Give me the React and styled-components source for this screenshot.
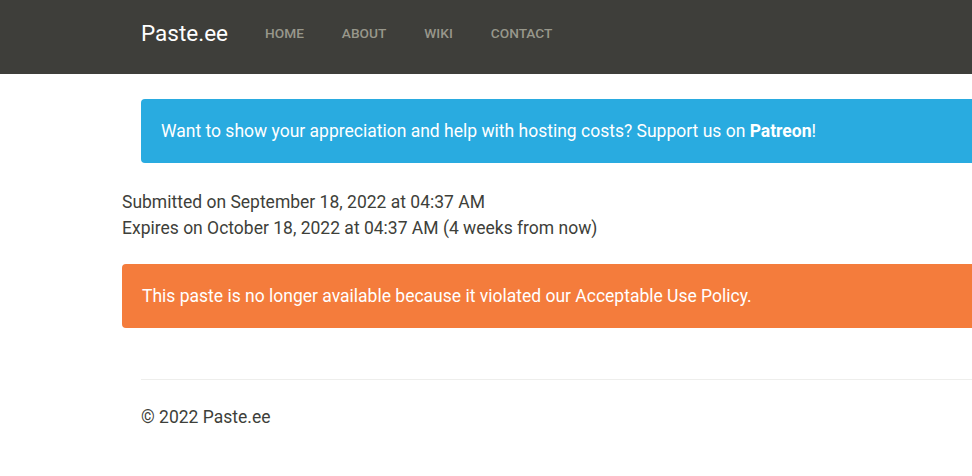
import React from "react";
import styled, { createGlobalStyle } from "styled-components";

const GlobalStyle = createGlobalStyle`
  html, body {
    margin: 0;
    padding: 0;
    background: #fff;
    overflow: hidden;
  }
  body {
    font-family: Roboto, "Liberation Sans", sans-serif;
    font-size: 17.5px;
    color: #3e3f3a;
  }
`;

const App = () => {
  return (
    <>
      <GlobalStyle />
      <Navbar>
        <Brand>Paste.ee</Brand>
        <NavLinks>
          <NavLink>Home</NavLink>
          <NavLink>About</NavLink>
          <NavLink>Wiki</NavLink>
          <NavLink>Contact</NavLink>
        </NavLinks>
      </Navbar>
      <Main>
        <Alert $tone="info" $inset>
          Want to show your appreciation and help with hosting costs? Support us on <b>Patreon</b>!
        </Alert>
        <Meta>
          <div>Submitted on September 18, 2022 at 04:37 AM</div>
          <div>Expires on October 18, 2022 at 04:37 AM (4 weeks from now)</div>
        </Meta>
        <Alert $tone="warning">
          This paste is no longer available because it violated our Acceptable Use Policy.
        </Alert>
      </Main>
      <Footer>
        <Rule />
        <Copy>© 2022 Paste.ee</Copy>
      </Footer>
    </>
  );
};

const Navbar = styled.nav`
  height: 74px;
  background: #3e3e3a;
  display: flex;
  align-items: center;
  padding-left: 141px;
  box-sizing: border-box;
`;

const Brand = styled.a`
  color: #fff;
  font-size: 22.5px;
  margin-right: 37px;
  margin-top: -8px;
`;

const NavLinks = styled.div`
  display: flex;
  gap: 38px;
  margin-top: -8px;
`;

const NavLink = styled.a`
  color: #98978b;
  font-size: 13.7px;
  font-weight: 500;
  text-transform: uppercase;
`;

const Main = styled.main`
  padding: 25px 0 0 122px;
`;

const Alert = styled.div`
  box-sizing: border-box;
  width: 1000px;
  height: 64px;
  line-height: 64px;
  white-space: nowrap;
  padding: 0 20px;
  margin-left: ${(p) => (p.$inset ? "19px" : "0")};
  border-radius: 4px;
  color: #fff;
  background: ${(p) => (p.$tone === "info" ? "#29abe0" : "#f47c3c")};

  b {
    font-weight: 700;
  }
`;

const Meta = styled.div`
  padding: 26px 0 0;
  margin-bottom: 23px;
  line-height: 26px;
`;

const Footer = styled.footer`
  padding: 51px 0 0 141px;
`;

const Rule = styled.div`
  height: 1px;
  width: 1000px;
  background: #eeeeec;
`;

const Copy = styled.p`
  margin: 27px 0 0;
`;

export default App;
